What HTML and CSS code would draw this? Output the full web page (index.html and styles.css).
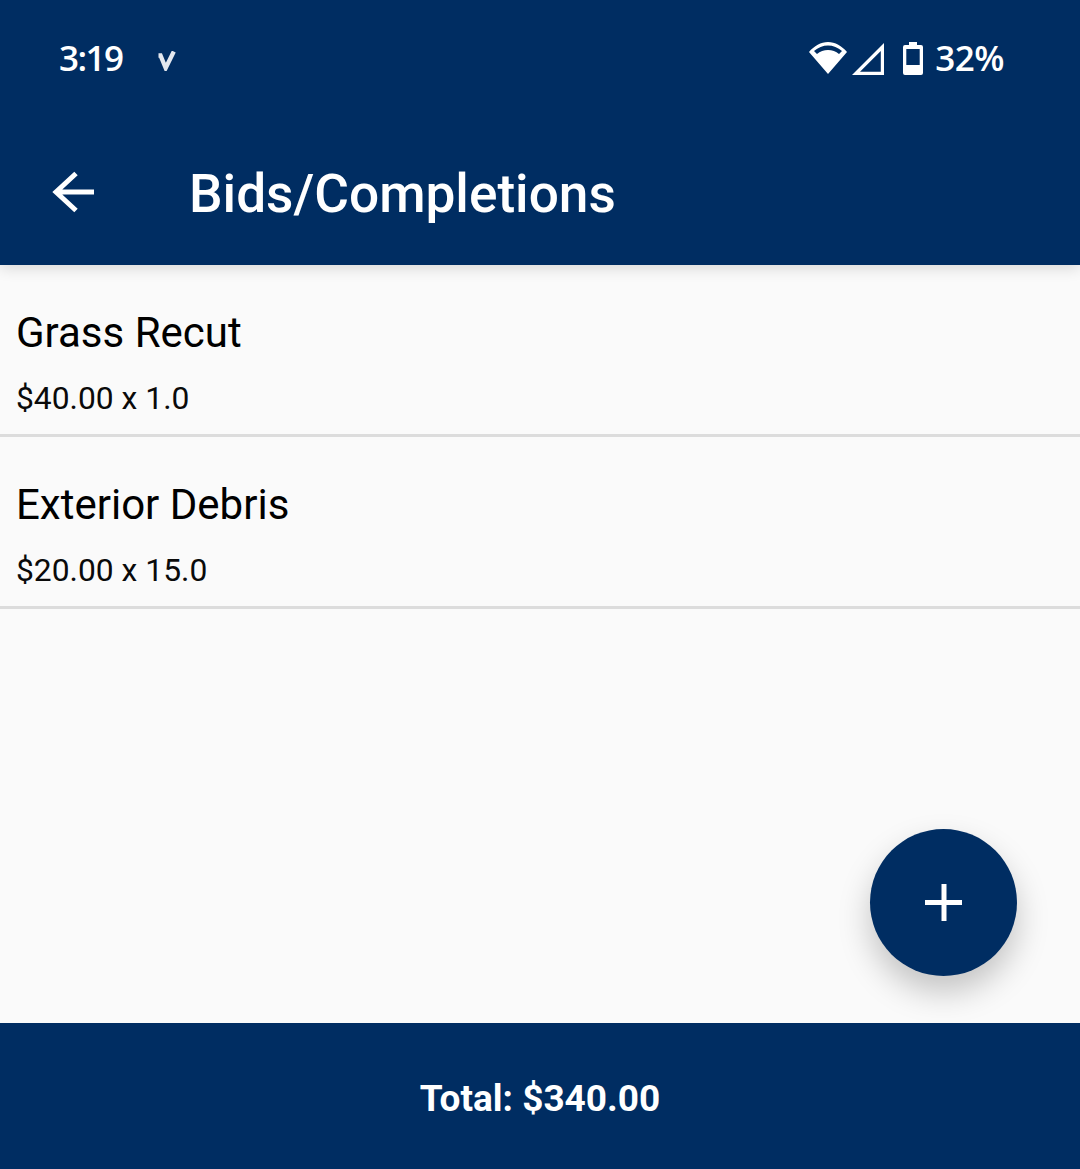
FILE: index.html
```html
<!DOCTYPE html>
<html lang="en">
<head>
<meta charset="utf-8">
<title>Bids/Completions</title>
<link rel="stylesheet" href="styles.css">
</head>
<body>
<div class="screen">
  <header class="appbar">
    <div class="status">
      <div class="status-left">
        <span class="time">3:19</span>
        <svg class="check" viewBox="0 0 18 20" width="18" height="20"><path d="M0.500 4.500 H2.500 L7.700 17 L15.800 0.500" fill="none" stroke="#e3e8ef" stroke-width="4.300"/></svg>
      </div>
      <div class="status-right">
        <svg class="wifi" viewBox="0 0 38 32" width="38" height="32"><path d="M19 32 L0 10 C5 4 12 0 19 0 C26 0 33 4 38 10 Z M5 9 L8 12 C11 9.500 15 8 19 8 C23 8 27 9.500 30 12 L33 9 C29 5.500 24 3.500 19 3.500 C14 3.500 9 5.500 5 9 Z" fill="#fff" fill-rule="evenodd"/></svg>
        <svg class="signal" viewBox="0 0 32 32" width="32" height="32"><path d="M0 32 L32 0 V32 Z M28.800 8 L8 28.800 H28.800 Z" fill="#fff" fill-rule="evenodd"/></svg>
        <svg class="battery" viewBox="0 0 20 33" width="20" height="33"><path d="M6 0 H14 V3 H18 A2 2 0 0 1 20 5 V31 A2 2 0 0 1 18 33 H2 A2 2 0 0 1 0 31 V5 A2 2 0 0 1 2 3 H6 Z M3.300 7 V23 H16.700 V7 Z" fill="#fff" fill-rule="evenodd"/></svg>
        <span class="percent">32%</span>
      </div>
    </div>
    <div class="toolbar">
      <svg class="back" viewBox="0 0 42 42" width="42" height="42"><path d="M42 21 H5 M24 2.500 L4 21 L24 39.500" fill="none" stroke="#fff" stroke-width="5"/></svg>
      <h1 class="title">Bids/Completions</h1>
    </div>
  </header>
  <main class="list">
    <div class="item">
      <div class="item-name">Grass Recut</div>
      <div class="item-detail">$40.00 x 1.0</div>
    </div>
    <div class="item">
      <div class="item-name">Exterior Debris</div>
      <div class="item-detail">$20.00 x 15.0</div>
    </div>
    <button class="fab" aria-label="Add">
      <svg viewBox="0 0 38 38" width="38" height="38"><path d="M19 0 V37 M0 18.500 H37" fill="none" stroke="#fff" stroke-width="5"/></svg>
    </button>
  </main>
  <footer class="total">Total: $340.00</footer>
</div>
</body>
</html>
```
FILE: styles.css
```css
* { box-sizing: border-box; }
html, body { margin: 0; padding: 0; }
body { font-family: Roboto, "Liberation Sans", sans-serif; background: #fafafa; }
.screen { width: 1080px; height: 1169px; display: flex; flex-direction: column; overflow: hidden; }
.appbar { height: 265px; flex: none; background: #002d62; color: #fff; display: flex; flex-direction: column; box-shadow: 0 3px 14px rgba(0,0,0,.14); position: relative; z-index: 1; }
.status { height: 118px; flex: none; display: flex; justify-content: space-between; align-items: center; padding: 0 76px 0 59px; }
.status-left, .status-right { display: flex; align-items: center; }
.time { font-family: "Open Sans", Roboto, sans-serif; font-size: 35px; font-weight: 600; letter-spacing: -1.500px; line-height: 40px; margin-bottom: 3px; }
.check { margin-left: 35px; margin-top: 4px; }
.wifi { margin-bottom: 2px; }
.signal { margin-left: 5px; margin-bottom: 1px; }
.battery { margin-left: 19px; margin-bottom: 2px; }
.percent { font-family: "Open Sans", Roboto, sans-serif; font-size: 35px; font-weight: 600; margin-left: 12px; letter-spacing: -0.500px; line-height: 34px; margin-bottom: 2px; }
.toolbar { flex: 1; display: flex; align-items: center; padding-left: 52px; }
.title { margin: 5px 0 0 95px; font-size: 53.200px; font-weight: 500; line-height: 62px; }
.list { flex: 1; position: relative; }
.item { height: 172px; padding: 43px 16px 0; border-bottom: 3px solid #dcdcdc; color: #000; }
.item-name { font-size: 42px; line-height: 50px; }
.item-detail { font-size: 31.800px; line-height: 40px; margin-top: 20px; color: #0a0a0a; }
.fab { position: absolute; left: 870px; top: 564px; width: 147px; height: 147px; border: 0; border-radius: 50%; background: #002d62; display: flex; align-items: center; justify-content: center; padding: 0; box-shadow: 0 16px 32px rgba(0,0,0,.22); }
.total { height: 146px; flex: none; background: #002d62; color: #fff; display: flex; align-items: center; justify-content: center; padding-top: 4px; font-size: 37px; font-weight: 700; }
```
